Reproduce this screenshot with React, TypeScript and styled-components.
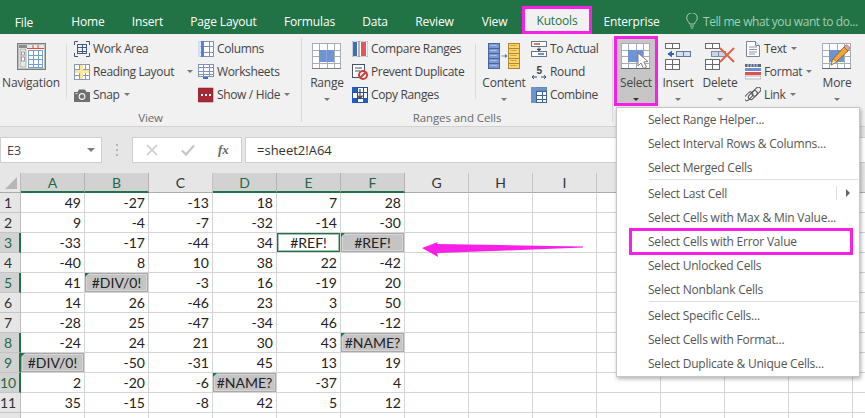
import React from "react";
import styled, { createGlobalStyle } from "styled-components";

const UI = `"Open Sans", "Noto Sans", sans-serif`;

const Global = createGlobalStyle`
  html, body { margin: 0; padding: 0; height: 418px; overflow: hidden; background: #fff; }
  #root { width: 865px; height: 418px; overflow: hidden; }
  * { box-sizing: border-box; }
`;

const Page = styled.div`
  position: relative;
  width: 865px;
  height: 418px;
  overflow: hidden;
  background: #e6e6e6;
  font-family: ${UI};
  font-size: 12px;
  color: #444;
`;

/* ---------- tabs ---------- */
const TabBar = styled.div`
  display: flex;
  height: 34px;
  background: #217346;
  align-items: flex-end;
`;
const Tab = styled.div<{ $w: number; $file?: boolean }>`
  width: ${(p) => p.$w}px;
  height: 28px;
  flex: none;
  display: flex;
  justify-content: center;
  align-items: center;
  color: #fff;
  font-size: 12px;
  letter-spacing: -0.15px;
  padding-top: ${(p) => (p.$file ? 4 : 2)}px;
  padding-right: ${(p) => (p.$file ? 9 : 0)}px;
`;
const ActiveTab = styled.div`
  width: 70px;
  height: 28px;
  flex: none;
  background: #f1f1f1;
  border: 3px solid #f81fe6;
  color: #217346;
  font-size: 12px;
  letter-spacing: -0.15px;
  display: flex;
  justify-content: center;
  align-items: center;
`;
const TellMe = styled.div`
  display: flex;
  align-items: center;
  gap: 5px;
  height: 28px;
  padding-top: 2px;
  margin-left: 15px;
  color: #a3cdb5;
  font-size: 12px;
  letter-spacing: -0.42px;
  white-space: nowrap;
`;

/* ---------- ribbon ---------- */
const Ribbon = styled.div`
  display: flex;
  height: 93px;
  background: #f1f1f1;
  border-bottom: 1px solid #d2d2d2;
`;
const Group = styled.div<{ $w: number }>`
  width: ${(p) => p.$w}px;
  flex: none;
  display: flex;
  flex-direction: column;
`;
const GroupBody = styled.div`
  display: flex;
  height: 72px;
  padding-top: 3px;
`;
const GroupLabel = styled.div`
  text-align: center;
  color: #6a6a6a;
  font-size: 11.5px;
  line-height: 16px;
  margin-top: 4px;
  letter-spacing: -0.1px;
`;
const GroupRule = styled.div`
  width: 1px;
  height: 84px;
  margin-top: 4px;
  background: #dadada;
  flex: none;
`;
const SepV = styled.div<{ $ml: number; $mr: number }>`
  width: 1px;
  height: 55px;
  margin: 7px ${(p) => p.$mr}px 0 ${(p) => p.$ml}px;
  background: #dcdcdc;
  flex: none;
`;
const Large = styled.div<{ $w: number; $ml?: number }>`
  width: ${(p) => p.$w}px;
  margin-left: ${(p) => p.$ml ?? 0}px;
  flex: none;
  display: flex;
  flex-direction: column;
  align-items: center;
  padding-top: 6px;
  white-space: nowrap;
  color: #444;
`;
const SelectBtn = styled.div`
  width: 44px;
  height: 70px;
  margin-left: 1px;
  margin-top: -1px;
  flex: none;
  display: flex;
  flex-direction: column;
  align-items: center;
  padding-top: 4px;
  background: #c6c6c6;
  border: 3px solid #f81fe6;
`;
const LargeIcon = styled.div`
  height: 28px;
  display: flex;
  align-items: flex-start;
`;
const LargeText = styled.div`
  margin-top: 3px;
  line-height: 18px;
  letter-spacing: -0.2px;
`;
const Caret = styled.span<{ $dark?: boolean }>`
  display: inline-block;
  width: 0;
  height: 0;
  border-left: 3px solid transparent;
  border-right: 3px solid transparent;
  border-top: 3px solid ${(p) => (p.$dark ? "#333" : "#777")};
  flex: none;
`;
const LargeCaret = styled(Caret)`
  margin-top: 6px;
`;
const SmallCol = styled.div<{ $w: number; $ml?: number }>`
  width: ${(p) => p.$w}px;
  margin-left: ${(p) => p.$ml ?? 0}px;
  flex: none;
  display: flex;
  flex-direction: column;
`;
const SmallRow = styled.div`
  height: 23.5px;
  display: flex;
  align-items: center;
  white-space: nowrap;
  letter-spacing: -0.35px;
  gap: 3px;
`;
const SmallCaret = styled(Caret)<{ $gap?: number }>`
  margin-left: ${(p) => p.$gap ?? 1}px;
`;
const IconBox = styled.span`
  width: 16px;
  height: 16px;
  display: block;
  flex: none;
`;

/* ---------- formula bar ---------- */
const FormulaBar = styled.div`
  display: flex;
  height: 26px;
  margin-top: 10px;
`;
const NameBox = styled.div`
  width: 102px;
  flex: none;
  background: #fff;
  border: 1px solid #cfcfcf;
  padding: 0 7px 0 6px;
  display: flex;
  align-items: center;
  justify-content: space-between;
  font-size: 12.5px;
  color: #444;
`;
const NameCaret = styled.span`
  width: 0;
  height: 0;
  border-left: 4px solid transparent;
  border-right: 4px solid transparent;
  border-top: 4px solid #7f7f7f;
  margin-right: -1px;
`;
const Grip = styled.div`
  width: 30px;
  flex: none;
  display: flex;
  flex-direction: column;
  align-items: center;
  justify-content: center;
  gap: 3px;
`;
const GripDot = styled.span`
  width: 2px;
  height: 2px;
  background: #b5b5b5;
`;
const FxBox = styled.div`
  width: 110px;
  flex: none;
  background: #fff;
  border: 1px solid #cfcfcf;
  display: flex;
  align-items: center;
  padding-left: 13px;
  gap: 23px;
`;
const FxText = styled.span`
  font-family: "Liberation Serif", serif;
  font-style: italic;
  font-weight: bold;
  font-size: 13px;
  color: #6a6a6a;
`;
const Formula = styled.div`
  flex: 1;
  margin-left: 3px;
  background: #fff;
  border: 1px solid #cfcfcf;
  border-right: none;
  padding-left: 11px;
  display: flex;
  align-items: center;
  font-size: 13px;
  color: #333;
`;

/* ---------- sheet ---------- */
const Sheet = styled.div`
  margin-top: 10px;
  display: grid;
  grid-template-columns: 21px repeat(14, 64px);
  grid-auto-rows: 20px;
  background: #fff;
  font-family: "Lato", "Liberation Sans", sans-serif;
  font-size: 14px;
  color: #222;
`;
const Corner = styled.div`
  background: #e6e6e6;
  border-right: 1px solid #bdbdbd;
  border-bottom: 1px solid #ababab;
  display: flex;
  align-items: flex-end;
  justify-content: flex-end;
  padding: 0 3px 3px 0;
`;
const CornerMark = styled.span`
  width: 0;
  height: 0;
  border-left: 12px solid transparent;
  border-bottom: 12px solid #b6b6b6;
`;
const ColHead = styled.div<{ $on: boolean }>`
  background: ${(p) => (p.$on ? "#d2d2d2" : "#e6e6e6")};
  border-right: 1px solid ${(p) => (p.$on ? "#b4b4b4" : "#c4c4c4")};
  border-bottom: ${(p) => (p.$on ? "2px solid #217346" : "1px solid #ababab")};
  color: ${(p) => (p.$on ? "#1f6a45" : "#333")};
  display: flex;
  align-items: center;
  justify-content: center;
  font-size: 14px;
`;
const RowHead = styled.div<{ $on: boolean }>`
  background: ${(p) => (p.$on ? "#d2d2d2" : "#e6e6e6")};
  border-right: ${(p) => (p.$on ? "2px solid #217346" : "1px solid #bdbdbd")};
  border-bottom: 1px solid #c4c4c4;
  color: ${(p) => (p.$on ? "#1f6a45" : "#333")};
  display: flex;
  align-items: center;
  justify-content: center;
  padding-right: ${(p) => (p.$on ? 3 : 4)}px;
  font-size: 14px;
`;
const Cell = styled.div<{ $kind: "plain" | "error" | "active" }>`
  position: relative;
  border-right: 1px solid #d4d4d4;
  border-bottom: 1px solid #d4d4d4;
  display: flex;
  align-items: center;
  justify-content: ${(p) => (p.$kind === "plain" ? "flex-end" : "center")};
  padding-right: ${(p) => (p.$kind === "plain" ? 3 : 0)}px;
  background: ${(p) => (p.$kind === "error" ? "#c4c4c4" : "#fff")};
  box-shadow: ${(p) =>
    p.$kind === "error"
      ? "inset 0 0 0 1px #a9a9a9, inset 0 0 0 2px #d6d6d6"
      : p.$kind === "active"
      ? "inset 0 0 0 1px #217346, inset 0 0 0 2px #9cc4ae"
      : "none"};
  &::before {
    content: "";
    display: ${(p) => (p.$kind === "error" ? "block" : "none")};
    position: absolute;
    left: 0;
    top: 0;
    width: 0;
    height: 0;
    border-top: 4px solid #217346;
    border-right: 4px solid transparent;
  }
`;

/* ---------- overlays ---------- */
const Menu = styled.div`
  position: absolute;
  left: 616px;
  top: 107px;
  width: 244px;
  height: 270px;
  background: #fff;
  border: 1px solid #c6c6c6;
  box-shadow: 1px 2px 4px rgba(0, 0, 0, 0.3);
  font-size: 12px;
  letter-spacing: -0.22px;
  color: #555;
`;
const MenuItem = styled.div`
  height: 24px;
  display: flex;
  align-items: center;
  padding-left: 31px;
  white-space: nowrap;
  position: relative;
  &:first-child {
    margin-top: -1px;
  }
`;
const MenuSep = styled.div`
  height: 1px;
  margin: 0 1px 1px 32px;
  background: #dedede;
`;
const MenuHighlight = styled.div`
  position: absolute;
  left: 12px;
  top: -1px;
  width: 224px;
  height: 27px;
  border: 3px solid #f81fe6;
`;
const SubRule = styled.span`
  position: absolute;
  left: 219px;
  top: 5px;
  width: 1px;
  height: 14px;
  background: #dedede;
`;
const SubArrow = styled.span`
  position: absolute;
  left: 229px;
  top: 8px;
  width: 0;
  height: 0;
  border-top: 4px solid transparent;
  border-bottom: 4px solid transparent;
  border-left: 4px solid #666;
`;
const ArrowMark = styled.svg`
  position: absolute;
  left: 415px;
  top: 235px;
`;

/* ---------- icons ---------- */
const GridLines = ({ x, y, w, h, cols, rows, c = "#7f8fa8" }: { x: number; y: number; w: number; h: number; cols: number; rows: number; c?: string }) => (
  <g stroke={c} strokeWidth="1" fill="none" shapeRendering="crispEdges">
    <rect x={x + 0.5} y={y + 0.5} width={w - 1} height={h - 1} />
    {Array.from({ length: cols - 1 }, (_, i) => {
      const xx = Math.round(x + ((i + 1) * w) / cols) + 0.5;
      return <line key={"c" + i} x1={xx} x2={xx} y1={y} y2={y + h} />;
    })}
    {Array.from({ length: rows - 1 }, (_, i) => {
      const yy = Math.round(y + ((i + 1) * h) / rows) + 0.5;
      return <line key={"r" + i} x1={x} x2={x + w} y1={yy} y2={yy} />;
    })}
  </g>
);

const S = ({ children }: { children: React.ReactNode }) => (
  <svg width="16" height="16" viewBox="0 0 16 16" style={{ display: "block" }}>{children}</svg>
);
const L = ({ w = 30, h = 28, children }: { w?: number; h?: number; children: React.ReactNode }) => (
  <svg width={w} height={h} viewBox={`0 0 ${w} ${h}`} style={{ display: "block" }}>{children}</svg>
);

const NavIcon = () => (
  <L w={29} h={27}>
    <rect x="0.5" y="0.5" width="28" height="26" fill="#fff" stroke="#7d7d7d" />
    <rect x="1.5" y="1.5" width="26" height="24" fill="none" stroke="#bdbdbd" />
    <rect x="2" y="2" width="25" height="3" fill="#8c8c8c" />
    <rect x="10" y="2" width="17" height="3" fill="#e9e9e9" />
    <rect x="3" y="6" width="6" height="18" fill="#e8e8e8" stroke="#8c8c8c" strokeWidth="0.7" />
    <rect x="4.5" y="9" width="3" height="3" fill="#fff" stroke="#777" strokeWidth="0.7" />
    <rect x="4.5" y="14" width="3" height="4" fill="#fff" stroke="#777" strokeWidth="0.7" />
    <GridLines x={11} y={7} w={15} h={18} cols={3} rows={4} c="#6f9ed0" />
    <line x1="10" x2="27" y1="5.5" y2="5.5" stroke="#e24b3c" />
    <line x1="16" x2="16" y1="2" y2="6" stroke="#e24b3c" />
    <line x1="21" x2="21" y1="2" y2="6" stroke="#e24b3c" />
  </L>
);
const WorkAreaIcon = () => (
  <S>
    <path d="M.5 4V.5H4M12 .5h3.500V4M15.500 12v3.500H12M4 15.500H.5V12" fill="none" stroke="#44546f" />
    <GridLines x={3} y={3} w={10} h={10} cols={2} rows={3} c="#3f5a80" />
  </S>
);
const ReadingIcon = () => (
  <S>
    <rect x="0" y="0" width="16" height="16" fill="#fff" />
    <GridLines x={0} y={0} w={16} h={16} cols={3} rows={3} c="#8a9ab5" />
    <rect x="6" y="1" width="3" height="14" fill="#fbe79b" />
    <rect x="1" y="6" width="14" height="3" fill="#fbe79b" />
  </S>
);
const CameraIcon = () => (
  <S>
    <path d="M0 5h3.500l1.500-2.500h6L12.500 5H16v10H0z" fill="#6f6f6f" />
    <circle cx="8" cy="9.500" r="3.400" fill="#f1f1f1" />
    <circle cx="8" cy="9.500" r="2.200" fill="#6f6f6f" />
    <rect x="1.500" y="6" width="2" height="1.200" fill="#ddd" />
  </S>
);
const ColumnsIcon = () => (
  <S>
    <rect width="16" height="16" fill="#fff" />
    <GridLines x={0} y={0} w={16} h={16} cols={3} rows={3} c="#7d93b5" />
    <rect x="3" y="0" width="3" height="16" fill="#4f81d5" />
    <rect x="0" y="0" width="2.500" height="16" fill="#cfe0f5" />
  </S>
);
const WorksheetsIcon = () => (
  <S>
    <rect x="0" y="0" width="16" height="13" fill="#fff" />
    <GridLines x={0} y={0} w={16} h={13} cols={3} rows={4} c="#7d93b5" />
    <rect x="5" y="13" width="5" height="2" fill="#3d6fc4" />
  </S>
);
const ShowHideIcon = () => (
  <S>
    <rect x="0" y="1" width="15" height="14" fill="#a52a36" stroke="#7d1e28" strokeWidth="0.5" />
    <rect x="3" y="7" width="2" height="2" fill="#fff" />
    <rect x="7" y="7" width="2" height="2" fill="#fff" />
    <rect x="11" y="7" width="2" height="2" fill="#fff" />
  </S>
);
const RangeIcon = () => (
  <L>
    <rect width="29" height="26" fill="#fff" />
    <GridLines x={0} y={0} w={29} h={26} cols={4} rows={4} c="#a7adb8" />
    <rect x="7" y="7" width="15" height="12" fill="#6f93d3" />
    <line x1="14.500" x2="14.500" y1="7" y2="19" stroke="#86a6dc" />
    <line x1="0" x2="29" y1="25.500" y2="25.500" stroke="#7a7f88" />
  </L>
);
const CompareIcon = () => (
  <S>
    <rect width="16" height="16" fill="#fff" stroke="#5a6a85" strokeWidth="0.6" />
    <rect x="1" y="1" width="4" height="14" fill="#3f6db8" />
    <rect x="9" y="1" width="5" height="14" fill="#e4565e" />
    <line x1="7" x2="7" y1="0" y2="16" stroke="#5a6a85" />
  </S>
);
const PreventIcon = () => (
  <S>
    <rect x="0.500" y="0.500" width="12" height="13" fill="#fff" stroke="#44546f" />
    <line x1="3" x2="10" y1="4" y2="4" stroke="#44546f" />
    <line x1="3" x2="8" y1="7" y2="7" stroke="#44546f" />
    <circle cx="11" cy="11" r="4" fill="#fff" stroke="#c9403d" strokeWidth="2" />
    <line x1="8.200" x2="13.800" y1="13.800" y2="8.200" stroke="#c9403d" strokeWidth="2" />
  </S>
);
const CopyRangesIcon = () => (
  <S>
    <rect width="16" height="16" fill="#fff" />
    <GridLines x={0} y={0} w={16} h={16} cols={3} rows={3} c="#1f4f9a" />
    <rect x="0" y="0" width="5" height="5" fill="#1f5fc0" />
    <rect x="11" y="11" width="5" height="5" fill="#1f5fc0" />
    <rect x="0" y="11" width="5" height="5" fill="#1f5fc0" />
    <path d="M8 2v9M5.500 8.500L8 11.500l2.500-3" fill="none" stroke="#444" strokeWidth="1.200" />
  </S>
);
const ContentIcon = () => (
  <L w={32} h={27}>
    {[0, 1, 2, 3, 4].map((i) => (
      <g key={i}>
        <rect x="0.500" y={0.5 + i * 5} width="11" height="5" fill="#7b97d4" stroke="#4a659e" />
        <path d={`M2.500 ${3 + i * 5}l1-1 1 1 1-1 1 1 1-1 1 1`} fill="none" stroke="#d5def2" strokeWidth="0.7" />
        <rect x="20.500" y={0.5 + i * 5} width="11" height="5" fill="#fbd667" stroke="#a8873a" />
        <path d={`M22.500 ${3 + i * 5}l1-1 1 1 1-1 1 1 1-1 1 1`} fill="none" stroke="#b07e20" strokeWidth="0.7" />
      </g>
    ))}
    <path d="M13.500 13h5" stroke="#6f8cc8" strokeWidth="1" />
    <path d="M17 11l2.500 2-2.500 2z" fill="#4a72b8" />
  </L>
);
const ToActualIcon = () => (
  <S>
    <rect x="0.500" y="0.500" width="15" height="5" fill="#fff" stroke="#66758f" />
    <line x1="3" x2="9" y1="3" y2="3" stroke="#d0403a" strokeWidth="1.400" />
    <rect x="0.500" y="10.500" width="15" height="5" fill="#fff" stroke="#66758f" />
    <line x1="7" x2="13" y1="13" y2="13" stroke="#2f63b0" strokeWidth="1.400" />
    <path d="M8 6v2M6 8h4L8 10z" fill="#444" stroke="#444" strokeWidth="0.6" />
  </S>
);
const RoundIcon = () => (
  <S>
    <text x="8" y="9.500" textAnchor="middle" fontFamily="Liberation Sans, sans-serif" fontWeight="bold" fontSize="10" fill="#444">5</text>
    <path d="M1 13h5M1 13l2-1.700M1 13l2 1.700M10 13h5M15 13l-2-1.700M15 13l-2 1.700" fill="none" stroke="#2c4f85" strokeWidth="1" />
  </S>
);
const CombineIcon = () => (
  <S>
    <rect width="16" height="16" fill="#fff" />
    <GridLines x={0} y={0} w={16} h={16} cols={3} rows={4} c="#3f6596" />
    <rect x="0" y="0" width="16" height="4" fill="#6e93cf" stroke="#3f6596" strokeWidth="0.5" />
    <rect x="0" y="0" width="5" height="16" fill="#6e93cf" />
  </S>
);
const SelectIcon = () => (
  <L w={31} h={27}>
    <rect width="29" height="26" fill="#fff" />
    <GridLines x={0} y={0} w={29} h={26} cols={4} rows={4} c="#a7adb8" />
    <rect x="7" y="7" width="15" height="12" fill="#6f93d3" />
    <line x1="0" x2="29" y1="25.500" y2="25.500" stroke="#5d6878" />
    <path d="M17 10l0 13 3-3 2.500 5.500 3-1.400-2.600-5.200 4.100-.4z" fill="#fff" stroke="#777" strokeWidth="0.9" />
  </L>
);
const InsertIcon = () => (
  <L w={27} h={27}>
    <g fill="#fff" stroke="#6a6a6a">
      <rect x="0.500" y="0.500" width="14" height="5" />
      <line x1="7.500" x2="7.500" y1="0" y2="6" />
      <rect x="0.500" y="16.500" width="14" height="10" />
      <line x1="7.500" x2="7.500" y1="16" y2="27" />
      <line x1="0" x2="15" y1="21.500" y2="21.500" />
    </g>
    <g fill="#d3e0f2" stroke="#64799a">
      <rect x="11.500" y="8.500" width="7" height="5" />
      <rect x="18.500" y="8.500" width="7" height="5" />
    </g>
    <path d="M3 11h6" stroke="#3765b0" strokeWidth="2" />
    <path d="M7 7.500L2.500 11 7 14.500z" fill="#3765b0" />
  </L>
);
const DeleteIcon = () => (
  <L w={31} h={27}>
    <g fill="#fff" stroke="#6a6a6a">
      <rect x="0.500" y="0.500" width="14" height="5" />
      <line x1="7.500" x2="7.500" y1="0" y2="6" />
      <rect x="0.500" y="16.500" width="14" height="10" />
      <line x1="7.500" x2="7.500" y1="16" y2="27" />
      <line x1="0" x2="15" y1="21.500" y2="21.500" />
    </g>
    <g fill="#c8d6ea" stroke="#7d8ba3">
      <rect x="6.500" y="8.500" width="7" height="5" />
      <rect x="13.500" y="8.500" width="7" height="5" />
    </g>
    <path d="M15 5l14 14M29 5L15 19" stroke="#e0654a" strokeWidth="2" />
  </L>
);
const TextIcon = () => (
  <S>
    <path d="M1.500.5h9l4 4v11h-13z" fill="#fff" stroke="#7a8698" />
    <path d="M10.500.5v4h4" fill="#e6ebf3" stroke="#7a8698" />
    <path d="M4 6h8M4 8.500h8M4 11h8M4 13h6" stroke="#8a94a6" />
  </S>
);
const FormatIcon = () => (
  <S>
    <rect width="16" height="16" fill="#fff" />
    <rect x="0" y="0" width="16" height="3" fill="#59677f" />
    <path d="M3 0v3M6 0v3M9 0v3M12 0v3" stroke="#cdd4e0" />
    <rect x="0" y="4" width="16" height="3" fill="#6d8fd1" />
    <rect x="0" y="8" width="16" height="3" fill="#d9534f" />
    <rect x="0" y="12" width="16" height="3" fill="#fff" stroke="#7f8ca3" strokeWidth="0.7" />
  </S>
);
const LinkIcon = () => (
  <S>
    <g fill="none" stroke="#555" strokeWidth="1" transform="rotate(45 8 8)">
      <rect x="5.500" y="-2" width="5" height="10.500" rx="2.500" />
      <rect x="5.500" y="3" width="5" height="10.500" rx="2.500" />
      <rect x="3.300" y="7" width="5" height="10" rx="2.500" />
    </g>
  </S>
);
const MoreIcon = () => (
  <L w={31} h={27}>
    <rect width="29" height="26" fill="#fff" />
    <GridLines x={0} y={0} w={29} h={26} cols={4} rows={4} c="#a7adb8" />
    <rect x="7" y="7" width="15" height="12" fill="#6f93d3" />
    <line x1="0" x2="29" y1="25.500" y2="25.500" stroke="#5d6878" />
    <path d="M9 22l2-6L22 4l4 4-12 11z" fill="#f3a43a" stroke="#8a5a1a" strokeWidth="0.8" />
    <path d="M9 22l2-6 4 3z" fill="#fbe3b5" stroke="#8a5a1a" strokeWidth="0.6" />
    <path d="M22 4l2-2c1-.6 2.500 1 4 3l-2 3z" fill="#e8a0a0" stroke="#8a5a1a" strokeWidth="0.6" />
  </L>
);
const Bulb = () => (
  <svg width="12" height="16" viewBox="0 0 12 16" style={{ display: "block" }}>
    <path d="M3.500 11c0-2-2.800-3.200-2.800-6a5.300 5.300 0 0 1 10.600 0c0 2.800-2.800 4-2.800 6zM4 13h4M4.800 15h2.400" fill="none" stroke="#a3cdb5" strokeWidth="1" />
  </svg>
);
const XMark = () => (
  <svg width="12" height="12" viewBox="0 0 12 12" style={{ display: "block" }}>
    <path d="M1 1l10 10M11 1L1 11" stroke="#c6c6c6" strokeWidth="1.400" />
  </svg>
);
const CheckMark = () => (
  <svg width="14" height="12" viewBox="0 0 14 12" style={{ display: "block" }}>
    <path d="M1 6.500l4 4 8-9" fill="none" stroke="#c6c6c6" strokeWidth="2.200" />
  </svg>
);

/* ---------- data ---------- */
/* Columns past I lie under the menu or off the page, so their headers carry no letter. */
const cols = ["A", "B", "C", "D", "E", "F", "G", "H", "I", "", "", "", "", ""];
const selectedCols = new Set(["A", "B", "D", "E", "F"]);
const selectedRows = new Set([3, 5, 8, 9, 10]);
const data: (number | string)[][] = [
  [49, -27, -13, 18, 7, 28],
  [9, -4, -7, -32, -14, -30],
  [-33, -17, -44, 34, "#REF!", "#REF!"],
  [-40, 8, 10, 38, 22, -42],
  [41, "#DIV/0!", -3, 16, -19, 20],
  [14, 26, -46, 23, 3, 50],
  [-28, 25, -47, -34, 46, -12],
  [-24, 24, 21, 30, 43, "#NAME?"],
  ["#DIV/0!", -50, -31, 45, 13, 19],
  [2, -20, -6, "#NAME?", -37, 4],
  [35, -15, -8, 42, 5, 12],
  [],
];

type SmallItem = { icon: React.ReactNode; label: string; caret?: number };
const SmallItems = ({ items }: { items: SmallItem[] }) => (
  <>
    {items.map((it) => (
      <SmallRow key={it.label}>
        <IconBox>{it.icon}</IconBox>
        {it.label}
        {it.caret !== undefined && <SmallCaret $gap={it.caret} />}
      </SmallRow>
    ))}
  </>
);

const LargeBtn = ({ w, ml, icon, label, caret = true }: { w: number; ml?: number; icon: React.ReactNode; label: string; caret?: boolean }) => (
  <Large $w={w} $ml={ml}>
    <LargeIcon>{icon}</LargeIcon>
    <LargeText>{label}</LargeText>
    {caret && <LargeCaret />}
  </Large>
);

const menuTop = ["Select Range Helper...", "Select Interval Rows & Columns...", "Select Merged Cells"];
const menuBottom = ["Select Specific Cells...", "Select Cells with Format...", "Select Duplicate & Unique Cells..."];

export default function App() {
  return (
    <Page>
      <Global />
      <TabBar>
        <Tab $w={57} $file>File</Tab>
        <Tab $w={62}>Home</Tab>
        <Tab $w={57}>Insert</Tab>
        <Tab $w={95}>Page Layout</Tab>
        <Tab $w={77}>Formulas</Tab>
        <Tab $w={54}>Data</Tab>
        <Tab $w={65}>Review</Tab>
        <Tab $w={55}>View</Tab>
        <ActiveTab>Kutools</ActiveTab>
        <Tab $w={79}>Enterprise</Tab>
        <TellMe>
          <Bulb />
          Tell me what you want to do...
        </TellMe>
      </TabBar>

      <Ribbon>
        <Group $w={301}>
          <GroupBody>
            <LargeBtn w={62} icon={<NavIcon />} label="Navigation" caret={false} />
            <SepV $ml={4} $mr={7} />
            <SmallCol $w={124}>
              <SmallItems
                items={[
                  { icon: <WorkAreaIcon />, label: "Work Area" },
                  { icon: <ReadingIcon />, label: "Reading Layout", caret: 10 },
                  { icon: <CameraIcon />, label: "Snap", caret: 1 },
                ]}
              />
            </SmallCol>
            <SmallCol $w={100}>
              <SmallItems
                items={[
                  { icon: <ColumnsIcon />, label: "Columns" },
                  { icon: <WorksheetsIcon />, label: "Worksheets" },
                  { icon: <ShowHideIcon />, label: "Show / Hide", caret: 1 },
                ]}
              />
            </SmallCol>
          </GroupBody>
          <GroupLabel>View</GroupLabel>
        </Group>
        <GroupRule />
        <Group $w={310}>
          <GroupBody>
            <LargeBtn w={46} ml={2} icon={<RangeIcon />} label="Range" />
            <SmallCol $w={123} $ml={2}>
              <SmallItems
                items={[
                  { icon: <CompareIcon />, label: "Compare Ranges" },
                  { icon: <PreventIcon />, label: "Prevent Duplicate" },
                  { icon: <CopyRangesIcon />, label: "Copy Ranges" },
                ]}
              />
            </SmallCol>
            <SepV $ml={0} $mr={5} />
            <LargeBtn w={46} icon={<ContentIcon />} label="Content" />
            <SmallCol $w={80} $ml={4}>
              <SmallItems
                items={[
                  { icon: <ToActualIcon />, label: "To Actual" },
                  { icon: <RoundIcon />, label: "Round" },
                  { icon: <CombineIcon />, label: "Combine" },
                ]}
              />
            </SmallCol>
          </GroupBody>
          <GroupLabel>Ranges and Cells</GroupLabel>
        </Group>
        <GroupRule />
        <Group $w={250}>
          <GroupBody>
            <SelectBtn>
              <LargeIcon><SelectIcon /></LargeIcon>
              <LargeText>Select</LargeText>
              <LargeCaret $dark />
            </SelectBtn>
            <LargeBtn w={40} icon={<InsertIcon />} label="Insert" />
            <LargeBtn w={42} ml={1} icon={<DeleteIcon />} label="Delete" />
            <SmallCol $w={72} $ml={4}>
              <SmallItems
                items={[
                  { icon: <TextIcon />, label: "Text", caret: 1 },
                  { icon: <FormatIcon />, label: "Format", caret: 1 },
                  { icon: <LinkIcon />, label: "Link", caret: 1 },
                ]}
              />
            </SmallCol>
            <LargeBtn w={40} icon={<MoreIcon />} label="More" />
          </GroupBody>
        </Group>
      </Ribbon>

      <FormulaBar>
        <NameBox>E3<NameCaret /></NameBox>
        <Grip><GripDot /><GripDot /><GripDot /></Grip>
        <FxBox>
          <XMark />
          <CheckMark />
          <FxText>fx</FxText>
        </FxBox>
        <Formula>=sheet2!A64</Formula>
      </FormulaBar>

      <Sheet>
        <Corner><CornerMark /></Corner>
        {cols.map((c, i) => (
          <ColHead key={i} $on={selectedCols.has(c)}>{c}</ColHead>
        ))}
        {data.map((row, r) => (
          <React.Fragment key={r}>
            <RowHead $on={selectedRows.has(r + 1)}>{r < 11 ? r + 1 : ""}</RowHead>
            {cols.map((_, i) => {
              const v = row[i];
              const isErr = typeof v === "string";
              const active = r === 2 && i === 4;
              return (
                <Cell key={i} $kind={active ? "active" : isErr ? "error" : "plain"}>
                  {v}
                </Cell>
              );
            })}
          </React.Fragment>
        ))}
      </Sheet>

      <ArrowMark width="172" height="26" viewBox="0 0 172 26">
        <path d="M7 13L23 7L22 9L85 10L168 11.500V12.500L85 15.700L22 18L23 22Z" fill="#f81fe6" />
      </ArrowMark>

      <Menu>
        {menuTop.map((t) => <MenuItem key={t}>{t}</MenuItem>)}
        <MenuSep />
        <MenuItem>Select Last Cell<SubRule /><SubArrow /></MenuItem>
        <MenuItem>Select Cells with Max &amp; Min Value...</MenuItem>
        <MenuItem>Select Cells with Error Value<MenuHighlight /></MenuItem>
        <MenuItem>Select Unlocked Cells</MenuItem>
        <MenuItem>Select Nonblank Cells</MenuItem>
        <MenuSep />
        {menuBottom.map((t) => <MenuItem key={t}>{t}</MenuItem>)}
      </Menu>
    </Page>
  );
}
